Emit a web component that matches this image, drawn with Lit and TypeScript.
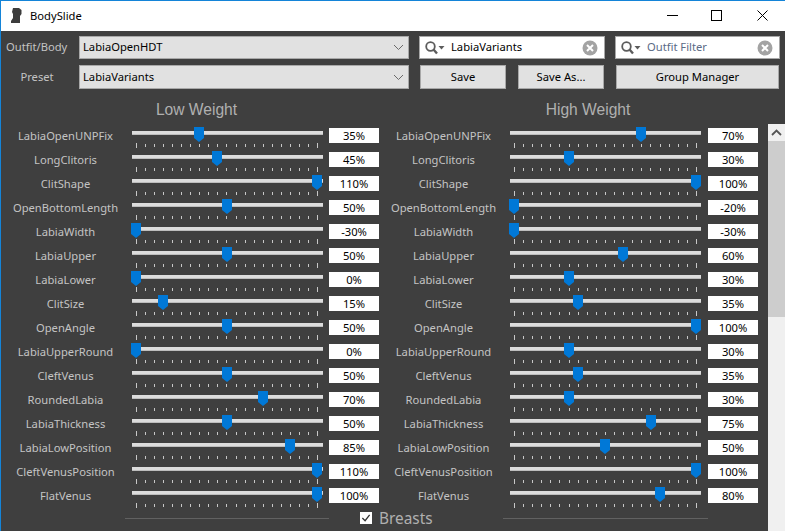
import { LitElement, html, css, svg } from "lit";
import { customElement } from "lit/decorators.js";

const rows: [string, number, number][] = [
  ["LabiaOpenUNPFix", 35, 70],
  ["LongClitoris", 45, 30],
  ["ClitShape", 110, 100],
  ["OpenBottomLength", 50, -20],
  ["LabiaWidth", -30, -30],
  ["LabiaUpper", 50, 60],
  ["LabiaLower", 0, 30],
  ["ClitSize", 15, 35],
  ["OpenAngle", 50, 100],
  ["LabiaUpperRound", 0, 30],
  ["CleftVenus", 50, 35],
  ["RoundedLabia", 70, 30],
  ["LabiaThickness", 50, 75],
  ["LabiaLowPosition", 85, 50],
  ["CleftVenusPosition", 110, 100],
  ["FlatVenus", 100, 80],
];

@customElement("app-root")
export class AppRoot extends LitElement {
  static styles = css`
    :host { display: block; width: 788px; height: 531px; background: #fff; overflow: hidden;
      font-family: "Noto Sans", "Open Sans", sans-serif; font-size: 11.2px; }
    * { box-sizing: border-box; }
    .window { width: 785px; height: 531px; border-left: 1px solid #1484d8; border-top: 1px solid #1484d8;
      display: flex; flex-direction: column; }
    .title { height: 30px; background: #fff; display: flex; align-items: center; color: #000; flex: none; padding-bottom: 2px; }
    .appicon { margin: 0 8px 0 10px; }
    .title span { flex: 1; }
    .wc { display: flex; align-items: center; padding-right: 17px; gap: 33px; }
    .wc .close { margin-left: 2px; }
    .body { flex: 1; background: #3f3f3f; display: flex; flex-direction: column; min-height: 0; }
    .toolbar { display: grid; grid-template-columns: 78px 330px 10px 186px 10px 165px;
      grid-template-rows: 23px 24px; row-gap: 6px; padding-top: 5px; flex: none; }
    .lbl { color: #c4c4c4; display: flex; align-items: center; justify-content: center; padding: 0 6px 2px 0; }
    .lbl.first { justify-content: flex-start; padding: 0 0 2px 5px; }
    .select { background: #e1e1e1; border: 1px solid #a8a8a8; display: flex; align-items: center;
      justify-content: space-between; padding: 0 4px 2px 3px; color: #000; }
    .select svg { margin-top: 2px; }
    .search { background: #fff; border: 1px solid #a8a8a8; display: flex; align-items: center; padding: 0 6px 0 5px; color: #000; }
    .search .text { flex: 1; padding: 0 0 2px 4px; }
    .search .ph { color: #5a6a85; }
    .buttons { grid-column: 4 / 7; display: grid; grid-template-columns: 86px 86px 163px; gap: 12px; padding-left: 1px; }
    .btn { background: #e1e1e1; border: 1px solid #a8a8a8; color: #000; display: flex; align-items: center; justify-content: center; padding-bottom: 2px; }
    .heads { display: grid; grid-template-columns: 391px 392px; height: 35px; flex: none; }
    .heads div { font: 15.6px "Liberation Sans", sans-serif; color: #b0b0b0; text-align: center; padding-top: 12px; }
    .main { flex: 1; display: flex; min-height: 0; }
    .panel { flex: 1; display: flex; flex-direction: column; min-width: 0; }
    .row { display: grid; grid-template-columns: 131px 191px 6px 50px 131px 191px 7px 50px; height: 24px; flex: none; }
    .name { color: #c4c4c4; text-align: center; line-height: 23px; white-space: nowrap; padding-right: 2px; }
    .slider { position: relative; height: 24px; }
    .track { position: absolute; left: 0; right: 0; top: 7px; background: #dcdcdc; border-bottom: 1px solid #bdbdbd; height: 4px; }
    .ticks { position: absolute; left: 4px; right: 5px; top: 18px; display: flex; justify-content: space-between; align-items: center; height: 6px; }
    .ticks.hi { right: 4px; }
    .tick { width: 1px; height: 3px; background: #c8c8c8; }
    .tick.end { height: 5px; }
    .thumb { position: absolute; top: 3px; width: 10px; height: 15px; }
    .val { background: #fff; color: #000; height: 15px; margin-top: 4px; text-align: center; line-height: 15px; }
    .section { height: 20px; display: flex; align-items: center; flex: none; }
    .sep { height: 1px; background: #616161; }
    .sep.a { margin-left: 124px; width: 204px; }
    .sep.b { margin-left: 69px; width: 205px; }
    .check { margin-left: 31px; width: 12px; height: 12px; background: #fff; display: flex; align-items: center; justify-content: center; }
    .sec-name { margin-left: 7px; font-size: 15.4px; color: #b0b0b0; width: 55px; white-space: nowrap; }
    .scroll { width: 17px; background: #f0f0f0; display: flex; flex-direction: column; flex: none; }
    .arrow { height: 17px; display: flex; align-items: center; justify-content: center; }
    .sthumb { height: 176px; background: #cdcdcd; }
  `;

  private icons = {
    search: svg`<svg width="22" height="14" viewBox="0 0 22 14"><circle cx="5.500" cy="5.500" r="4.300" fill="none" stroke="#5c5c5c" stroke-width="1.800"/><path d="M8.500 8.500 12 12.500" stroke="#5c5c5c" stroke-width="2.400"/><path d="M13.500 5h6l-3 3.500z" fill="#5c5c5c"/></svg>`,
    clear: svg`<svg width="16" height="16" viewBox="0 0 16 16"><circle cx="8" cy="8" r="7.500" fill="#a3a3a3"/><path d="M5 5l6 6M11 5l-6 6" stroke="#fff" stroke-width="2"/></svg>`,
    chev: svg`<svg width="11" height="7" viewBox="0 0 11 7"><path d="M1 1l4.500 4.500L10 1" fill="none" stroke="#6a6a6a" stroke-width="1"/></svg>`,
  };

  private slider(v: number, hi: boolean) {
    const f = Math.max(0, Math.min(1, v / 100));
    const left = Math.round(f * (hi ? 182 : 181) - 1);
    return html`<div class="slider">
      <div class="track"></div>
      <div class="ticks ${hi ? "hi" : ""}">${Array.from({ length: 21 }, (_, i) =>
        html`<span class="tick ${i === 0 || i === 20 ? "end" : ""}"></span>`)}</div>
      <svg class="thumb" style="left:${left}px" viewBox="0 0 10 15"><path d="M0 0h10v11l-5 4-5-4z" fill="#0078d7"/></svg>
    </div>`;
  }

  render() {
    return html`<div class="window">
      <div class="title">
        <svg class="appicon" width="11" height="15" viewBox="0 0 11 15"><path d="M2 0h6l2.500 2v4L9 8v7H0v-2l2-3V6L1 4z" fill="#3c3c3c"/></svg>
        <span>BodySlide</span>
        <div class="wc">
          <svg width="11" height="11" viewBox="0 0 11 11"><path d="M0 5.500h11" stroke="#000"/></svg>
          <svg width="11" height="11" viewBox="0 0 11 11"><rect x=".5" y=".5" width="10" height="10" fill="none" stroke="#000"/></svg>
          <svg class="close" width="11" height="11" viewBox="0 0 11 11"><path d="M.5.500l10 10M10.500.500l-10 10" stroke="#000"/></svg>
        </div>
      </div>
      <div class="body">
        <div class="toolbar">
          <div class="lbl first">Outfit/Body</div>
          <div class="select">LabiaOpenHDT ${this.icons.chev}</div>
          <div></div>
          <div class="search">${this.icons.search}<span class="text">LabiaVariants</span>${this.icons.clear}</div>
          <div></div>
          <div class="search">${this.icons.search}<span class="text ph">Outfit Filter</span>${this.icons.clear}</div>
          <div class="lbl">Preset</div>
          <div class="select">LabiaVariants ${this.icons.chev}</div>
          <div></div>
          <div class="buttons">
            <div class="btn">Save</div>
            <div class="btn">Save As...</div>
            <div class="btn">Group Manager</div>
          </div>
        </div>
        <div class="heads"><div>Low Weight</div><div>High Weight</div></div>
        <div class="main">
          <div class="panel">
            ${rows.map(([n, lo, hi]) => html`<div class="row">
              <div class="name">${n}</div>${this.slider(lo, false)}<div></div><div class="val">${lo}%</div>
              <div class="name">${n}</div>${this.slider(hi, true)}<div></div><div class="val">${hi}%</div>
            </div>`)}
            <div class="section">
              <div class="sep a"></div>
              <div class="check"><svg width="10" height="10" viewBox="0 0 11 11"><path d="M1.500 5.500l3 3 5-6.500" fill="none" stroke="#333" stroke-width="1.400"/></svg></div>
              <div class="sec-name">Breasts</div>
              <div class="sep b"></div>
            </div>
          </div>
          <div class="scroll">
            <div class="arrow"><svg width="11" height="7" viewBox="0 0 11 7"><path d="M1 6l4.500-4.500L10 6" fill="none" stroke="#555" stroke-width="1.800"/></svg></div>
            <div class="sthumb"></div>
          </div>
        </div>
      </div>
    </div>`;
  }
}
